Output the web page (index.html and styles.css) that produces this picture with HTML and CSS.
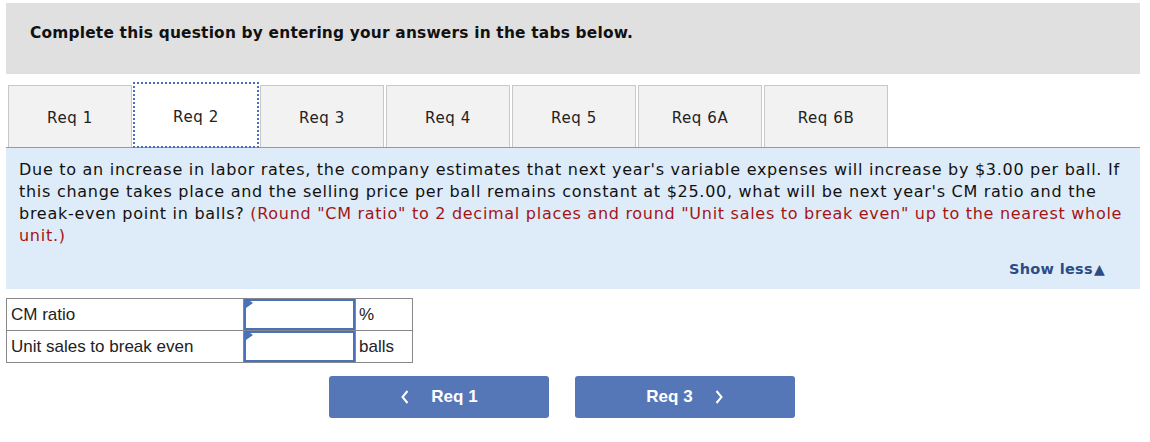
FILE: index.html
```html
<!DOCTYPE html>
<html>
<head>
<meta charset="utf-8">
<link rel="stylesheet" href="styles.css">
</head>
<body>
<div class="page">
  <div class="banner">Complete this question by entering your answers in the tabs below.</div>
  <div class="tabs">
    <div class="tab">Req 1</div>
    <div class="tab active">Req 2</div>
    <div class="tab">Req 3</div>
    <div class="tab">Req 4</div>
    <div class="tab">Req 5</div>
    <div class="tab">Req 6A</div>
    <div class="tab">Req 6B</div>
  </div>
  <div class="panel">
    <p class="question">Due to an increase in labor rates, the company estimates that next year's variable expenses will increase by $3.00 per ball. If this change takes place and the selling price per ball remains constant at $25.00, what will be next year's CM ratio and the break-even point in balls? <span class="note">(Round "CM ratio" to 2 decimal places and round "Unit sales to break even" up to the nearest whole unit.)</span></p>
    <div class="show-less">Show less<span class="tri">&#9650;</span></div>
  </div>
  <table class="answers">
    <tr>
      <td class="label">CM ratio</td>
      <td class="input"><div class="field"></div></td>
      <td class="unit">%</td>
    </tr>
    <tr>
      <td class="label">Unit sales to break even</td>
      <td class="input"><div class="field"></div></td>
      <td class="unit">balls</td>
    </tr>
  </table>
  <div class="nav">
    <div class="btn"><svg class="chev" width="10" height="16" viewBox="0 0 10 16"><polyline points="7.5,2 2.5,8 7.5,14" fill="none" stroke="#fff" stroke-width="2"/></svg>Req 1</div>
    <div class="btn">Req 3<svg class="chev right" width="10" height="16" viewBox="0 0 10 16"><polyline points="2.5,2 7.5,8 2.5,14" fill="none" stroke="#fff" stroke-width="2"/></svg></div>
  </div>
</div>
</body>
</html>
```
FILE: styles.css
```css
html, body {
  margin: 0;
  padding: 0;
  background: #ffffff;
}
body {
  font-family: "DejaVu Sans", Verdana, sans-serif;
  color: #000;
}
.page {
  padding: 3px 10px 0 6px;
  width: 1134px;
}
.banner {
  background: #e0e0e0;
  height: 71px;
  box-sizing: border-box;
  padding: 21px 0 0 24px;
  font-weight: bold;
  font-size: 15.4px;
  letter-spacing: 0.2px;
  color: #111;
}
.tabs {
  display: flex;
  gap: 2px;
  margin-top: 11px;
  padding-left: 2px;
  border-bottom: 1px solid #9a9a9a;
  height: 63px;
  box-sizing: border-box;
}
.tab {
  width: 124px;
  height: 62px;
  box-sizing: border-box;
  background: #f2f2f2;
  border: 1px solid #c8c8c8;
  border-bottom: none;
  display: flex;
  align-items: center;
  justify-content: center;
  padding-top: 2px;
  font-size: 15px;
  letter-spacing: 0.6px;
  color: #222;
}
.tab.active {
  background: #fff;
  border-color: #fff;
  outline: 2px dotted #4a6fb8;
  outline-offset: -1px;
  height: 64px;
  margin-top: -2px;
}
.panel {
  background: #deebf8;
  padding: 11px 8px 11px 13px;
  height: 141px;
  box-sizing: border-box;
  display: flex;
  flex-direction: column;
}
.question {
  margin: 0;
  font-size: 16px;
  line-height: 22px;
  letter-spacing: 0.72px;
  color: #111;
}
.note {
  color: #a31515;
}
.show-less {
  margin-top: auto;
  text-align: right;
  margin-right: 27px;
  font-weight: bold;
  font-size: 14.5px;
  letter-spacing: 0.3px;
  line-height: 18px;
  color: #2c4c88;
}
.tri {
  font-size: 14px;
  margin-left: 1px;
}
.answers {
  border-collapse: collapse;
  margin-top: 9px;
  font-family: "Liberation Sans", Arial, sans-serif;
  font-size: 17px;
  color: #222;
}
.answers td {
  border: 1px solid #888;
  height: 31px;
  padding: 0;
  box-sizing: border-box;
}
.answers .label {
  width: 237px;
  padding-left: 4px;
}
.answers .input {
  width: 112px;
}
.answers .unit {
  width: 57px;
  padding-left: 3px;
}
.field {
  position: relative;
  height: 31px;
  box-sizing: border-box;
  border: 2px solid #4a72b8;
  background: #fff;
}
.field::before {
  content: "";
  position: absolute;
  left: 0;
  top: 0;
  border-top: 5px solid transparent;
  border-bottom: 5px solid transparent;
  border-left: 7px solid #4a72b8;
  margin-top: -3px;
}
.nav {
  display: flex;
  gap: 26px;
  margin-top: 13px;
  padding-left: 323px;
}
.btn {
  width: 220px;
  height: 42px;
  background: #5577b8;
  border-radius: 3px;
  color: #fff;
  font-family: "Liberation Sans", Arial, sans-serif;
  font-weight: bold;
  font-size: 17px;
  display: flex;
  align-items: center;
  justify-content: center;
}
.chev {
  display: block;
  margin-right: 21px;
}
.chev.right {
  margin-right: 0;
  margin-left: 21px;
}
```
